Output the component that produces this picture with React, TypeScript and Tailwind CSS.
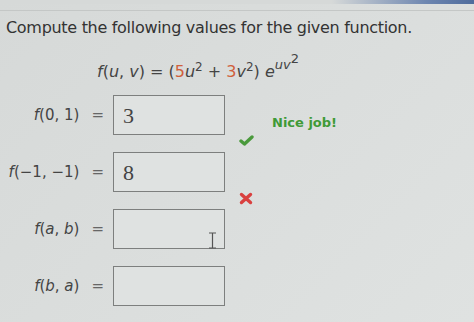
import React from "react";

const rows = [
  { label: "f(0, 1)", value: "3", status: "ok" },
  { label: "f(−1, −1)", value: "8", status: "bad" },
  { label: "f(a, b)", value: "", status: "cursor" },
  { label: "f(b, a)", value: "", status: "" },
];

function Check() {
  return (
    <svg width="15" height="11" viewBox="0 0 15 11">
      <path d="M2 6 L5.5 9 L13 2" fill="none" stroke="#4a9a3c" strokeWidth="3.4" strokeLinecap="round" strokeLinejoin="round" />
    </svg>
  );
}

function Cross() {
  return (
    <svg width="14" height="13" viewBox="0 0 14 13">
      <path d="M2.5 2.5 L11.5 10.5 M11.5 2.5 L2.5 10.5" fill="none" stroke="#d9403f" strokeWidth="3.4" strokeLinecap="round" />
    </svg>
  );
}

function Label({ text }: { text: string }) {
  // f is italic, letters a/b italic, digits upright
  const parts = text.split("");
  return (
    <span>
      {parts.map((c, i) =>
        /[fab]/.test(c) ? (
          <i key={i}>{c}</i>
        ) : (
          <span key={i}>{c}</span>
        )
      )}
    </span>
  );
}

export default function App() {
  return (
    <main className="w-[474px] h-[322px] overflow-hidden bg-[linear-gradient(135deg,#d6d9d8,#dfe2e1)] text-[#3a3a3a] font-['DejaVu_Sans',sans-serif] relative">
      <div className="h-[4px] bg-[linear-gradient(90deg,#d6d9d8_0%,#d6d9d8_70%,#6d86b0_90%,#4f6c9c_100%)]" />
      <div className="h-[7px] border-b border-[#c4c7c6]" />

      <h1 className="pl-[6px] pt-[6px] text-[16px] leading-[22px] text-[#333] tracking-[-0.3px]">
        Compute the following values for the given function.
      </h1>

      <div className="pl-[97px] pt-[22px] text-[16px] leading-[22px] text-[#444] flex items-baseline">
        <i>f</i>
        <span>(</span>
        <i>u</i>
        <span>,&nbsp;</span>
        <i>v</i>
        <span>) = (</span>
        <span className="text-[#d0603c]">5</span>
        <i>u</i>
        <sup className="text-[12px] -top-[6px]">2</sup>
        <span>&nbsp;+&nbsp;</span>
        <span className="text-[#d0603c]">3</span>
        <i>v</i>
        <sup className="text-[12px] -top-[6px]">2</sup>
        <span>)&nbsp;</span>
        <i>e</i>
        <sup className="text-[13px] -top-[8px] italic">
          uv<span className="not-italic relative -top-[6px] text-[13px]">2</span>
        </sup>
      </div>

      <div className="mt-[12px] flex flex-col gap-[17px]">
        {rows.map((r, i) => (
          <div key={i} className="flex items-start h-[40px]">
            <div className="w-[104px] h-[40px] flex items-center justify-end text-[15px] text-[#444] gap-[12px]">
              <Label text={r.label} />
              <span className="text-[#666]">=</span>
            </div>
            <div className="ml-[9px] w-[112px] h-[40px] border-[1.5px] border-[#7d7f7e] bg-[#dfe2e1] relative flex items-center pl-[9px] text-[22px] text-[#444] font-['Liberation_Serif',serif]">
              {r.value}
              {r.status === "cursor" && (
                <svg className="absolute left-[94px] top-[22px]" width="9" height="17" viewBox="0 0 9 17">
                  <path d="M1 1 H8 M4.5 1 V16 M1 16 H8" stroke="#555" strokeWidth="1.2" fill="none" />
                </svg>
              )}
            </div>
            <div className="w-[14px]" />
            <div className="pt-[40px] w-[20px]">
              {r.status === "ok" && <Check />}
              {r.status === "bad" && <Cross />}
            </div>
            {r.status === "ok" && (
              <div className="pl-[13px] pt-[20px] text-[13px] font-bold text-[#3f9a37] leading-[16px]">
                Nice job!
              </div>
            )}
          </div>
        ))}
      </div>
    </main>
  );
}
